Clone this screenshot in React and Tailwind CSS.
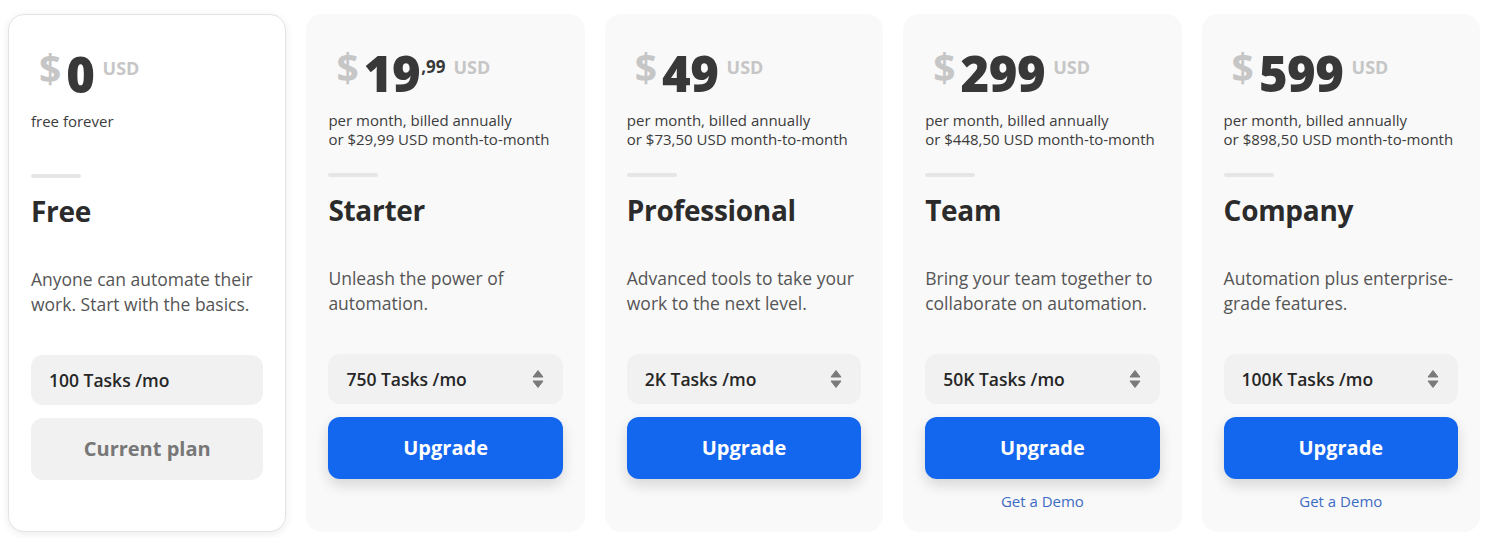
import React from "react";

const plans = [
  {
    free: true,
    price: "0",
    cents: null,
    sub: ["free forever"],
    name: "Free",
    desc: "Anyone can automate their work. Start with the basics.",
    tasks: "100 Tasks /mo",
  },
  {
    price: "19",
    cents: ",99",
    sub: ["per month, billed annually", "or $29,99 USD month-to-month"],
    name: "Starter",
    desc: "Unleash the power of automation.",
    tasks: "750 Tasks /mo",
  },
  {
    price: "49",
    cents: null,
    sub: ["per month, billed annually", "or $73,50 USD month-to-month"],
    name: "Professional",
    desc: "Advanced tools to take your work to the next level.",
    tasks: "2K Tasks /mo",
  },
  {
    price: "299",
    cents: null,
    sub: ["per month, billed annually", "or $448,50 USD month-to-month"],
    name: "Team",
    desc: "Bring your team together to collaborate on automation.",
    tasks: "50K Tasks /mo",
    demo: true,
  },
  {
    price: "599",
    cents: null,
    sub: ["per month, billed annually", "or $898,50 USD month-to-month"],
    name: "Company",
    desc: "Automation plus enterprise-grade features.",
    tasks: "100K Tasks /mo",
    demo: true,
  },
];

function UpDown() {
  return (
    <svg width="12" height="20" viewBox="0 0 12 20" className="shrink-0">
      <path d="M6 1.5 L11 8 L1 8 Z" fill="#7a7a7a" stroke="#7a7a7a" strokeWidth="1" strokeLinejoin="round" />
      <path d="M6 18.5 L11 12 L1 12 Z" fill="#7a7a7a" stroke="#7a7a7a" strokeWidth="1" strokeLinejoin="round" />
    </svg>
  );
}

function Card({ p }) {
  return (
    <div
      className={
        "flex flex-col h-[518px] rounded-[16px] px-[22px] pt-[34px] " +
        (p.free
          ? "bg-white border border-[#e4e4e4] shadow-[0_2px_8px_rgba(0,0,0,0.08)]"
          : "bg-[#f9f9f9]")
      }
    >
      <div className="flex items-start h-[50px] pl-[8px]">
        <span className="text-[39px] font-bold leading-none text-[#c6c6c6] mt-[-1px]">$</span>
        <span className="text-[49px] font-extrabold leading-none text-[#383838] ml-[5px] mt-[1px] tracking-[-0.5px]">
          {p.price}
        </span>
        {p.cents && (
          <span className="text-[17px] font-bold leading-none text-[#383838] mt-[10px] ml-[1px]">
            {p.cents}
          </span>
        )}
        <span className="text-[18px] font-bold leading-none text-[#c6c6c6] mt-[10px] ml-[8px]">USD</span>
      </div>
      <div className="mt-[13px] h-[38px] text-[15px] leading-[19px] text-[#3c3c3c]">
        {p.sub.map((s) => (
          <div key={s}>{s}</div>
        ))}
      </div>
      <div className="mt-[24px] w-[50px] h-[4px] rounded-full bg-[#e6e6e6]" />
      <div className="mt-[15px] text-[28px] leading-[36px] font-bold text-[#2b2b2b] tracking-[-0.3px]">
        {p.name}
      </div>
      <div className="mt-[38px] h-[50px] text-[17.5px] leading-[25px] text-[#555]">{p.desc}</div>
      <div className="mt-[38px] h-[50px] rounded-[12px] bg-[#f1f1f1] flex items-center justify-between pl-[18px] pr-[19px]">
        <span className="text-[17.5px] font-semibold text-[#262626]">{p.tasks}</span>
        {!p.free && <UpDown />}
      </div>
      {p.free ? (
        <div className="mt-[13px] h-[62px] rounded-[12px] bg-[#f1f1f1] flex items-center justify-center text-[20px] font-bold text-[#777]">
          Current plan
        </div>
      ) : (
        <div className="mt-[13px] h-[62px] rounded-[12px] bg-[#1366ee] shadow-[0_6px_14px_rgba(0,0,0,0.14)] flex items-center justify-center text-[20px] font-bold text-white">
          Upgrade
        </div>
      )}
      {p.demo && (
        <div className="mt-[12px] text-center text-[15px] leading-[20px] text-[#3d6cc4]">Get a Demo</div>
      )}
    </div>
  );
}

export default function App() {
  return (
    <div
      className="w-[1486px] h-[538px] bg-white pt-[14px] pl-[8px] pr-[6px] grid grid-cols-5 gap-x-[20px] items-start"
      style={{ fontFamily: '"Open Sans", "Noto Sans", sans-serif' }}
    >
      {plans.map((p) => (
        <Card key={p.name} p={p} />
      ))}
    </div>
  );
}
